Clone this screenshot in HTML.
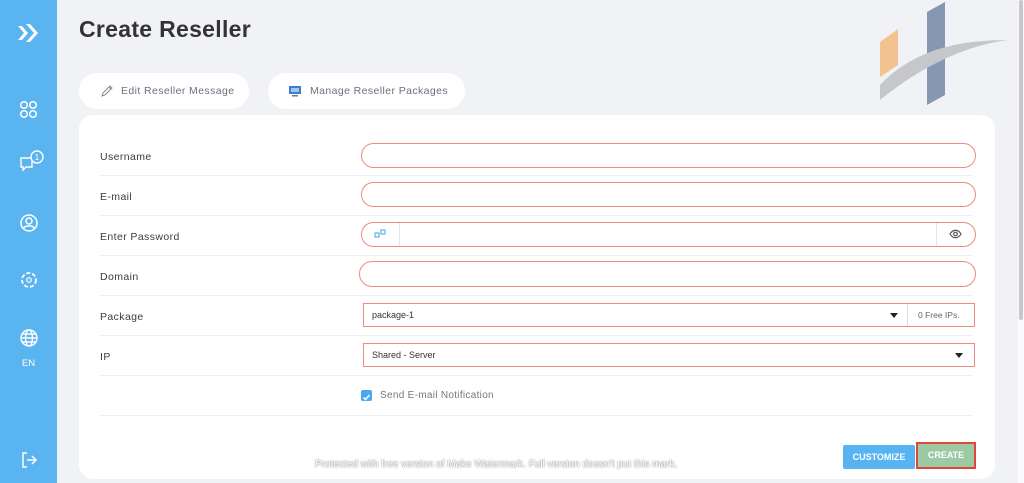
<!DOCTYPE html>
<html><head><meta charset="utf-8"><style>
*{box-sizing:border-box;margin:0;padding:0}
html,body{width:1024px;height:483px;overflow:hidden}
body{background:#f1f2f6;font-family:"Liberation Sans",sans-serif;position:relative}
.sb{position:absolute;left:0;top:0;width:57px;height:483px;background:#5ab4f0}
.sb svg{position:absolute}
h1{position:absolute;left:79px;top:16px;font-size:23px;font-weight:bold;color:#333;letter-spacing:0.3px}
.pill{position:absolute;top:73px;height:36px;background:#fff;border-radius:18px;font-size:10.5px;color:#6b7080;display:flex;align-items:center;letter-spacing:.4px}
.card{position:absolute;left:79px;top:115px;width:916px;height:364px;background:#fff;border-radius:14px}
.lab{position:absolute;left:100px;font-size:10.5px;color:#3a3d47;letter-spacing:.4px}
.sep{position:absolute;left:100px;width:873px;height:1px;background:#eceef2}
.in{position:absolute;left:361px;width:615px;height:25px;border:1.5px solid #ef8a7e;border-radius:13px;background:#fff}
.sel{position:absolute;left:363px;width:612px;height:24px;border:1.5px solid #ef8a7e;background:#fff;font-size:9px;color:#333;padding:6px 8px}
.tri{position:absolute;width:0;height:0;border-left:4.5px solid transparent;border-right:4.5px solid transparent;border-top:5px solid #222}
.wm{position:absolute;left:315px;top:459px;font-size:10px;color:#fff;text-shadow:0 0 1px #888,0 0 2px #999}
</style></head><body>
<div class="sb">
<svg style="left:15px;top:20px" width="26" height="26" viewBox="0 0 26 26"><path d="M3 6 L9 13 L3 20 L7 20 L13 13 L7 6Z M11 4 L19 13 L11 22 L15 22 L23 13 L15 4Z" fill="#fff"/></svg>
<svg style="left:19px;top:100px" width="20" height="20" viewBox="0 0 20 20" fill="none" stroke="#fff" stroke-width="1.5"><circle cx="5" cy="5" r="3.3"/><circle cx="14" cy="5" r="3.3"/><circle cx="5" cy="14" r="3.3"/><circle cx="14" cy="14" r="3.3"/></svg>
<svg style="left:18px;top:148px" width="28" height="28" viewBox="0 0 28 28" fill="none" stroke="#fff" stroke-width="1.4"><path d="M3 10 H14 V19 H8 L5 22 V19 H3Z"/><circle cx="19" cy="9" r="6" fill="#5ab4f0"/><text x="19" y="12" font-size="8" fill="#fff" stroke="none" text-anchor="middle" font-family="Liberation Sans">1</text></svg>
<svg style="left:19px;top:213px" width="20" height="20" viewBox="0 0 20 20" fill="none" stroke="#fff" stroke-width="1.5"><circle cx="10" cy="10" r="8"/><circle cx="10" cy="8" r="3"/><path d="M4.5 15.5 C6 12 14 12 15.5 15.5"/></svg>
<svg style="left:19px;top:270px" width="20" height="20" viewBox="0 0 20 20" fill="none" stroke="#fff" stroke-width="1.8"><circle cx="10" cy="10" r="7" stroke-dasharray="4 2"/><circle cx="10" cy="10" r="2.3" stroke-width="1.2"/></svg>
<svg style="left:19px;top:328px" width="20" height="20" viewBox="0 0 20 20" fill="none" stroke="#fff" stroke-width="1.4"><circle cx="10" cy="10" r="8"/><ellipse cx="10" cy="10" rx="3.5" ry="8"/><path d="M2 10H18M3.5 6H16.5M3.5 14H16.5"/></svg>
<div style="position:absolute;left:0;width:57px;top:358px;text-align:center;color:#fff;font-size:9.5px">EN</div>
<svg style="left:19px;top:450px" width="20" height="20" viewBox="0 0 20 20" fill="none" stroke="#fff" stroke-width="1.5"><path d="M8 3H4V17H8M8 10H17M13 6L17 10L13 14"/></svg>
</div>
<h1>Create Reseller</h1>
<svg style="position:absolute;left:878px;top:0" width="135" height="110" viewBox="0 0 135 110"><polygon points="2,42 20,29 20,65 2,77" fill="#f3c38f"/><polygon points="49,12 67,2 67,95 49,105" fill="#8697b2"/><path d="M2 85 C35 50 80 40 130 40 C90 45 45 65 2 100Z" fill="#c5c7cb"/></svg>
<div class="pill" style="left:79px;width:170px"><svg style="margin:0 8px 0 21px" width="13" height="13" viewBox="0 0 13 13" fill="none" stroke="#888" stroke-width="1"><path d="M2 11 L3 8 L10 1 L12 3 L5 10Z M9 2 L11 4"/></svg>Edit Reseller Message</div>
<div class="pill" style="left:268px;width:197px"><svg style="margin:0 8px 0 21px" width="13" height="11" viewBox="0 0 13 11"><rect x="0" y="0" width="12" height="8" fill="#3a7fc8"/><rect x="2" y="2" width="8" height="4" fill="#9fc8ee"/><rect x="3" y="9" width="6" height="1.5" fill="#777"/></svg>Manage Reseller Packages</div>
<div class="card"></div>
<div class="lab" style="top:151px">Username</div>
<div class="lab" style="top:191px">E-mail</div>
<div class="lab" style="top:231px">Enter Password</div>
<div class="lab" style="top:271px">Domain</div>
<div class="lab" style="top:311px">Package</div>
<div class="lab" style="top:351px">IP</div>
<div class="sep" style="top:175px"></div><div class="sep" style="top:215px"></div><div class="sep" style="top:255px"></div><div class="sep" style="top:295px"></div><div class="sep" style="top:335px"></div><div class="sep" style="top:375px"></div><div class="sep" style="top:415px"></div>
<div class="in" style="top:143px"></div>
<div class="in" style="top:182px"></div>
<div class="in" style="top:222px"><div style="position:absolute;left:37px;top:0;bottom:0;width:1px;background:#e5e5e5"></div><div style="position:absolute;right:38px;top:0;bottom:0;width:1px;background:#e5e5e5"></div>
<svg style="position:absolute;left:12px;top:6px" width="13" height="10" viewBox="0 0 13 10" fill="none" stroke="#6ab8ef" stroke-width="1.3"><rect x="1" y="4" width="4" height="4"/><rect x="7" y="1" width="4" height="4"/></svg>
<svg style="position:absolute;right:13px;top:6px" width="13" height="10" viewBox="0 0 13 10" fill="none" stroke="#555" stroke-width="1.2"><path d="M1 5 C4 0 9 0 12 5 C9 10 4 10 1 5Z"/><circle cx="6.5" cy="5" r="1.8"/></svg></div>
<div class="in" style="top:261px;left:359px;width:617px;height:26px"></div>
<div class="sel" style="top:303px">package-1<div class="tri" style="right:76px;top:9px"></div><div style="position:absolute;right:0;top:0;bottom:0;width:67px;border-left:1px solid #ddd;color:#666;font-size:8.5px;padding:6px 10px">0 Free IPs.</div></div>
<div class="sel" style="top:343px">Shared - Server<div class="tri" style="right:11px;top:9px"></div></div>
<div style="position:absolute;left:361px;top:390px;width:11px;height:11px;background:#4aa8ee;border-radius:2px"><svg width="11" height="11" viewBox="0 0 11 11"><path d="M2.5 5.5 L4.5 7.5 L8.5 3" stroke="#fff" stroke-width="1.5" fill="none"/></svg></div>
<div style="position:absolute;left:380px;top:390px;font-size:10px;color:#777;letter-spacing:.3px">Send E-mail Notification</div>
<div style="position:absolute;left:843px;top:445px;width:72px;height:24px;background:#55b4f1;border-radius:2px;color:#fff;font-size:9px;font-weight:bold;text-align:center;line-height:24px">CUSTOMIZE</div>
<div style="position:absolute;left:916px;top:442px;width:60px;height:27px;background:#9ccaa4;border:2px solid #e0463a;color:#fff;font-size:9px;font-weight:bold;text-align:center;line-height:23px">CREATE</div>
<div class="wm">Protected with free version of Make Watermark. Full version doesn't put this mark.</div>
<div style="position:absolute;left:1018px;top:0;width:6px;height:483px;background:#fafafa"><div style="margin:0 1px;height:320px;background:#c8c8c8;border-radius:3px"></div></div>
</body></html>
